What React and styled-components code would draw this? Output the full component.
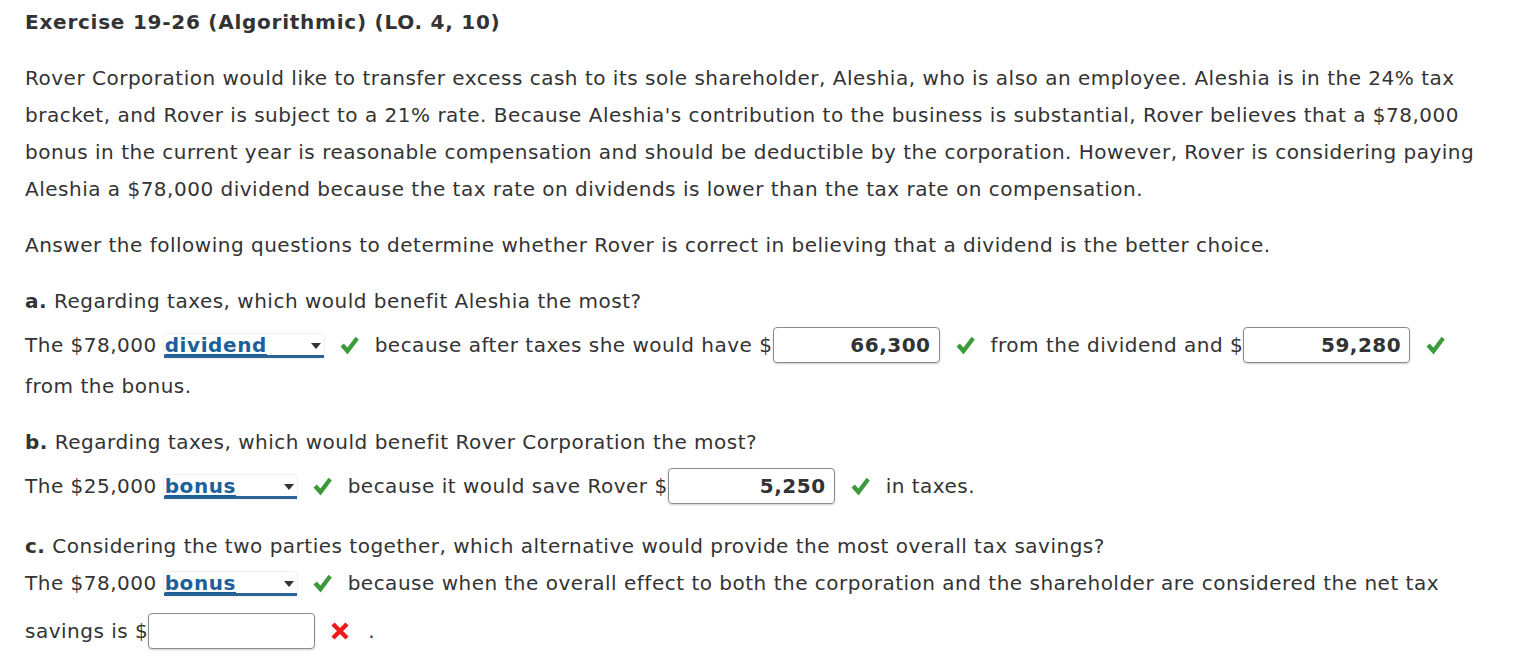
import React from "react";
import styled, { createGlobalStyle } from "styled-components";

const Global = createGlobalStyle`
  html, body { margin: 0; padding: 0; background: #fff; }
  body { font-family: "DejaVu Sans", Verdana, sans-serif; color: #333; }
`;

const Page = styled.div`
  padding: 10px 26px 0 25px;
  font-size: 20px;
  letter-spacing: 0.5px;
  line-height: 37px;
  max-width: 1480px;
`;

const Title = styled.h2`
  margin: 0 0 26px 0;
  font-size: 20px;
  font-weight: bold;
  letter-spacing: 0.75px;
  line-height: 24px;
  color: #333;
`;

const Para = styled.p`
  margin: 0 0 19px 0;
`;

const Block = styled.div`
  margin: 0 0 19px 0;
`;

const Label = styled.b`
  font-weight: bold;
`;

const Line = styled.div``;

const SelectBox = styled.span`
  display: inline-flex;
  align-items: center;
  justify-content: space-between;
  box-sizing: border-box;
  width: ${(p) => p.$w}px;
  height: 24px;
  margin: 0 0 10px 0;
  padding: 2px 3px 0 1px;
  border-bottom: 3px solid #2a6496;
  border-radius: 4px 4px 0 0;
  box-shadow: 0 0 2px rgba(0,0,0,0.2);
  color: #1c5f99;
  font-weight: bold;
  letter-spacing: 0.6px;
  line-height: 19px;
`;

const SelectText = styled.span`
  text-decoration: underline;
  text-decoration-thickness: 2px;
  text-underline-offset: 2px;
`;

const Caret = styled.span`
  width: 0;
  height: 0;
  border-left: 5px solid transparent;
  border-right: 5px solid transparent;
  border-top: 6px solid #333;
`;

const Input = styled.span`
  display: inline-block;
  box-sizing: border-box;
  width: 167px;
  height: 36px;
  margin: 7px 0 3px 0;
  border: 1px solid #8a8a8a;
  border-radius: 4px;
  box-shadow: 0 1px 2px rgba(0,0,0,0.2);
  text-align: right;
  font-weight: bold;
  padding: 0 8px;
  line-height: 34px;
  color: #333;
`;

const Mark = styled.span`
  display: inline-block;
  vertical-align: middle;
  margin: -3px ${(p) => p.$r ?? 16}px 0 ${(p) => p.$l ?? 16}px;
  line-height: 0;
`;

const Check = () => (
  <Mark>
    <svg width="19" height="19" viewBox="0 0 19 19">
      <path d="M0.5 10.5 L3.8 7.4 L7.4 11.6 L15.6 0.8 L18.8 3.4 L7.6 18.4 Z" fill="#3a9b3a" />
    </svg>
  </Mark>
);

const Cross = () => (
  <Mark $r={12}>
    <svg width="18" height="18" viewBox="0 0 18 18">
      <path d="M2 2 L16 16 M16 2 L2 16" stroke="#f01818" strokeWidth="4.4" />
    </svg>
  </Mark>
);

const Select = ({ value, w }) => (
  <SelectBox $w={w}>
    <SelectText>{value}</SelectText>
    <Caret />
  </SelectBox>
);

export default function App() {
  return (
    <>
      <Global />
      <Page>
        <Title>Exercise 19-26 (Algorithmic) (LO. 4, 10)</Title>
        <Para>
          Rover Corporation would like to transfer excess cash to its sole shareholder, Aleshia, who is also an employee. Aleshia is in the 24% tax bracket, and Rover is subject to a 21% rate. Because Aleshia's contribution to the business is substantial, Rover believes that a $78,000 bonus in the current year is reasonable compensation and should be deductible by the corporation. However, Rover is considering paying Aleshia a $78,000 dividend because the tax rate on dividends is lower than the tax rate on compensation.
        </Para>
        <Para>
          Answer the following questions to determine whether Rover is correct in believing that a dividend is the better choice.
        </Para>
        <Block>
          <Line><Label>a.</Label> Regarding taxes, which would benefit Aleshia the most?</Line>
          <Line>
            The $78,000 <Select value="dividend" w={160} /><Check />because after taxes she would have $<Input>66,300</Input><Check />from the dividend and $<Input>59,280</Input><Check />
          </Line>
          <Line>from the bonus.</Line>
        </Block>
        <Block>
          <Line><Label>b.</Label> Regarding taxes, which would benefit Rover Corporation the most?</Line>
          <Line>
            The $25,000 <Select value="bonus" w={133} /><Check />because it would save Rover $<Input>5,250</Input><Check />in taxes.
          </Line>
        </Block>
        <Block>
          <Line><Label>c.</Label> Considering the two parties together, which alternative would provide the most overall tax savings?</Line>
          <Line>
            The $78,000 <Select value="bonus" w={133} /><Check />because when the overall effect to both the corporation and the shareholder are considered the net tax savings is $<Input>{"\u00a0"}</Input><Cross /> .
          </Line>
        </Block>
      </Page>
    </>
  );
}
